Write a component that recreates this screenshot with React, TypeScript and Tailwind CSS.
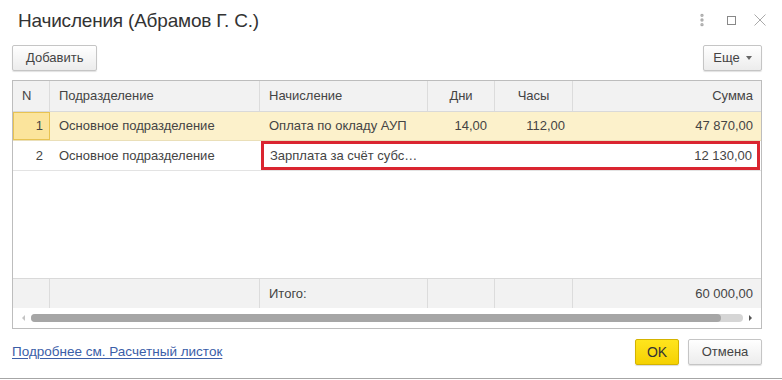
import { EllipsisVertical } from "lucide-react"

const font = { fontFamily: '"Liberation Sans", Arial, sans-serif' }

const cols = ["w-[37px]", "w-[210px]", "w-[168px]", "w-[67px]", "w-[78px]", "flex-1"]

export default function App() {
  return (
    <div className="w-[782px] h-[380px] bg-white text-[#444] text-[13px] relative overflow-hidden" style={font}>
      <div className="h-[379px] border-b border-[#a6a6a6] flex flex-col">
        {/* заголовок окна */}
        <div className="flex items-center h-[40px] pl-[18px] pr-[15px]">
          <h1 className="flex-1 text-[19px] text-[#333] leading-none tracking-[-0.2px]">Начисления (Абрамов Г. С.)</h1>
          <div className="flex items-center gap-[17px] text-[#aaa]">
            <EllipsisVertical className="w-[16px] h-[16px]" strokeWidth={3} />
            <div className="w-[9px] h-[9px] border border-[#888]" />
            <svg width="14" height="14" viewBox="0 0 14 14" className="text-[#aaa]">
              <path d="M1.5 1.5 L12.5 12.5 M12.5 1.5 L1.5 12.5" stroke="currentColor" strokeWidth="1" />
            </svg>
          </div>
        </div>

        {/* панель кнопок */}
        <div className="flex items-center justify-between pl-[12px] pr-[20px] mt-[5px]">
          <button className="h-[26px] px-[13px] border border-[#c5c5c5] rounded-[2px] bg-gradient-to-b from-white to-[#ececec] shadow-[0_1px_1px_rgba(0,0,0,0.12)] text-[#444]">
            Добавить
          </button>
          <button className="h-[26px] w-[59px] flex items-center justify-center gap-[6px] border border-[#c5c5c5] rounded-[2px] bg-gradient-to-b from-white to-[#ececec] shadow-[0_1px_1px_rgba(0,0,0,0.12)] text-[#444]">
            Еще
            <span className="w-0 h-0 border-l-[3px] border-r-[3px] border-t-[4px] border-l-transparent border-r-transparent border-t-[#666]" />
          </button>
        </div>

        {/* таблица */}
        <div className="ml-[12px] mr-[20px] mt-[9px] h-[249px] border border-[#bdbdbd] flex flex-col">
          <div className="flex h-[31px] bg-[#f2f2f2] border-b border-[#d9d9d9]">
            <div className={`${cols[0]} border-r border-[#dcdcdc] flex items-center pl-[9px]`}>N</div>
            <div className={`${cols[1]} border-r border-[#dcdcdc] flex items-center pl-[9px]`}>Подразделение</div>
            <div className={`${cols[2]} border-r border-[#dcdcdc] flex items-center pl-[9px]`}>Начисление</div>
            <div className={`${cols[3]} border-r border-[#dcdcdc] flex items-center justify-center`}>Дни</div>
            <div className={`${cols[4]} border-r border-[#dcdcdc] flex items-center justify-center`}>Часы</div>
            <div className={`${cols[5]} flex items-center justify-end pr-[8px]`}>Сумма</div>
          </div>

          <div className="flex h-[29px] bg-[#fcf1cb] border-b border-[#eadfb8]">
            <div className={`${cols[0]} bg-[#fbe49c] border border-[#e8c352] flex items-center justify-end pr-[6px]`}>1</div>
            <div className={`${cols[1]} flex items-center pl-[9px]`}>Основное подразделение</div>
            <div className={`${cols[2]} flex items-center pl-[9px]`}>Оплата по окладу АУП</div>
            <div className={`${cols[3]} flex items-center justify-end pr-[8px]`}>14,00</div>
            <div className={`${cols[4]} flex items-center justify-end pr-[8px]`}>112,00</div>
            <div className={`${cols[5]} flex items-center justify-end pr-[8px]`}>47 870,00</div>
          </div>

          <div className="flex h-[30px] border-b border-[#e3e3e3]">
            <div className={`${cols[0]} flex items-center justify-end pr-[7px]`}>2</div>
            <div className={`${cols[1]} flex items-center pl-[9px]`}>Основное подразделение</div>
            <div className="flex-1 ml-[1px] mr-[1px] border-[3px] border-[#da2530] flex items-center justify-between pl-[6px] pr-[5px]">
              <span>Зарплата за счёт субс…</span>
              <span>12 130,00</span>
            </div>
          </div>

          <div className="flex-1" />

          <div className="flex h-[30px] bg-[#f2f2f2] border-t border-[#d9d9d9]">
            <div className={`${cols[0]} border-r border-[#dcdcdc]`} />
            <div className={`${cols[1]} border-r border-[#dcdcdc]`} />
            <div className={`${cols[2]} border-r border-[#dcdcdc] flex items-center pl-[9px]`}>Итого:</div>
            <div className={`${cols[3]} border-r border-[#dcdcdc]`} />
            <div className={`${cols[4]} border-r border-[#dcdcdc]`} />
            <div className={`${cols[5]} flex items-center justify-end pr-[8px]`}>60 000,00</div>
          </div>

          {/* полоса прокрутки */}
          <div className="h-[20px] flex items-center px-[9px] gap-[6px]">
            <span className="w-0 h-0 border-t-[3px] border-b-[3px] border-r-[3px] border-t-transparent border-b-transparent border-r-[#c4c4c4]" />
            <div className="flex-1 h-[8px] rounded-full bg-[#d6d6d6] flex">
              <div className="w-[690px] h-[8px] rounded-full bg-[#a6a6a6]" />
            </div>
            <span className="w-0 h-0 border-t-[3px] border-b-[3px] border-l-[3px] border-t-transparent border-b-transparent border-l-[#555]" />
          </div>
        </div>

        {/* нижняя панель */}
        <div className="flex items-center justify-between pl-[12px] pr-[20px] mt-[10px]">
          <a href="#" className="text-[13.5px] text-[#3b5ea8] underline underline-offset-2">Подробнее см. Расчетный листок</a>
          <div className="flex gap-[9px]">
            <button className="h-[26px] w-[44px] border border-[#d4b300] rounded-[2px] bg-gradient-to-b from-[#ffe51c] to-[#f5d100] shadow-[0_1px_1px_rgba(0,0,0,0.15)] text-[#333] text-[14px]">
              OK
            </button>
            <button className="h-[26px] w-[74px] border border-[#c5c5c5] rounded-[2px] bg-gradient-to-b from-white to-[#ececec] shadow-[0_1px_1px_rgba(0,0,0,0.12)] text-[#444]">
              Отмена
            </button>
          </div>
        </div>
      </div>
    </div>
  )
}
